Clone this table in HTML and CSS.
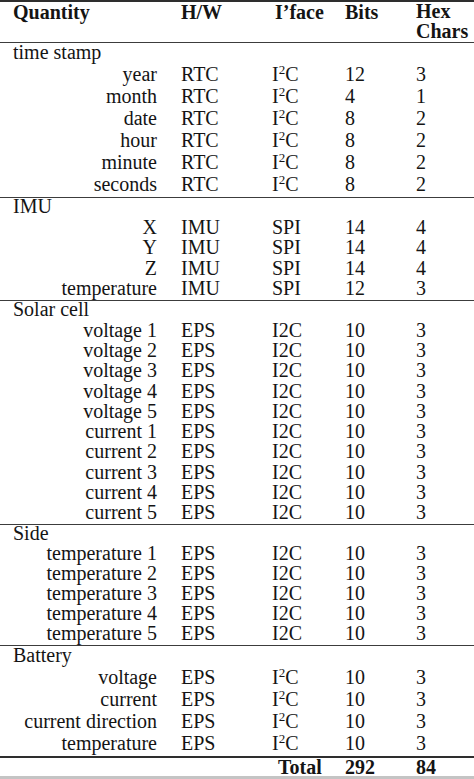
FILE: index.html
```html
<!DOCTYPE html>
<html>
<head>
<meta charset="utf-8">
<link rel="stylesheet" href="styles.css">
</head>
<body>
<table class="tbl">
  <colgroup>
    <col class="c1"><col class="c2"><col class="c3"><col class="c4"><col class="c5">
  </colgroup>
  <thead>
    <tr>
      <th class="q">Quantity</th>
      <th>H/W</th>
      <th>I’face</th>
      <th>Bits</th>
      <th><span class="hl">Hex</span><span class="hl">Chars</span></th>
    </tr>
  </thead>
  <tbody class="g1">
    <tr><td class="lbl" colspan="5">time stamp</td></tr>
    <tr><td class="n">year</td><td>RTC</td><td>I<sup class="s">2</sup>C</td><td>12</td><td>3</td></tr>
    <tr><td class="n">month</td><td>RTC</td><td>I<sup class="s">2</sup>C</td><td>4</td><td>1</td></tr>
    <tr><td class="n">date</td><td>RTC</td><td>I<sup class="s">2</sup>C</td><td>8</td><td>2</td></tr>
    <tr><td class="n">hour</td><td>RTC</td><td>I<sup class="s">2</sup>C</td><td>8</td><td>2</td></tr>
    <tr><td class="n">minute</td><td>RTC</td><td>I<sup class="s">2</sup>C</td><td>8</td><td>2</td></tr>
    <tr><td class="n">seconds</td><td>RTC</td><td>I<sup class="s">2</sup>C</td><td>8</td><td>2</td></tr>
  </tbody>
  <tbody class="g2">
    <tr><td class="lbl" colspan="5">IMU</td></tr>
    <tr><td class="n">X</td><td>IMU</td><td>SPI</td><td>14</td><td>4</td></tr>
    <tr><td class="n">Y</td><td>IMU</td><td>SPI</td><td>14</td><td>4</td></tr>
    <tr><td class="n">Z</td><td>IMU</td><td>SPI</td><td>14</td><td>4</td></tr>
    <tr><td class="n">temperature</td><td>IMU</td><td>SPI</td><td>12</td><td>3</td></tr>
  </tbody>
  <tbody class="g3">
    <tr><td class="lbl" colspan="5">Solar cell</td></tr>
    <tr><td class="n">voltage 1</td><td>EPS</td><td>I2C</td><td>10</td><td>3</td></tr>
    <tr><td class="n">voltage 2</td><td>EPS</td><td>I2C</td><td>10</td><td>3</td></tr>
    <tr><td class="n">voltage 3</td><td>EPS</td><td>I2C</td><td>10</td><td>3</td></tr>
    <tr><td class="n">voltage 4</td><td>EPS</td><td>I2C</td><td>10</td><td>3</td></tr>
    <tr><td class="n">voltage 5</td><td>EPS</td><td>I2C</td><td>10</td><td>3</td></tr>
    <tr><td class="n">current 1</td><td>EPS</td><td>I2C</td><td>10</td><td>3</td></tr>
    <tr><td class="n">current 2</td><td>EPS</td><td>I2C</td><td>10</td><td>3</td></tr>
    <tr><td class="n">current 3</td><td>EPS</td><td>I2C</td><td>10</td><td>3</td></tr>
    <tr><td class="n">current 4</td><td>EPS</td><td>I2C</td><td>10</td><td>3</td></tr>
    <tr><td class="n">current 5</td><td>EPS</td><td>I2C</td><td>10</td><td>3</td></tr>
  </tbody>
  <tbody class="g4">
    <tr><td class="lbl" colspan="5">Side</td></tr>
    <tr><td class="n">temperature 1</td><td>EPS</td><td>I2C</td><td>10</td><td>3</td></tr>
    <tr><td class="n">temperature 2</td><td>EPS</td><td>I2C</td><td>10</td><td>3</td></tr>
    <tr><td class="n">temperature 3</td><td>EPS</td><td>I2C</td><td>10</td><td>3</td></tr>
    <tr><td class="n">temperature 4</td><td>EPS</td><td>I2C</td><td>10</td><td>3</td></tr>
    <tr><td class="n">temperature 5</td><td>EPS</td><td>I2C</td><td>10</td><td>3</td></tr>
  </tbody>
  <tbody class="g5">
    <tr><td class="lbl" colspan="5">Battery</td></tr>
    <tr><td class="n">voltage</td><td>EPS</td><td>I<sup class="s">2</sup>C</td><td>10</td><td>3</td></tr>
    <tr><td class="n">current</td><td>EPS</td><td>I<sup class="s">2</sup>C</td><td>10</td><td>3</td></tr>
    <tr><td class="n">current direction</td><td>EPS</td><td>I<sup class="s">2</sup>C</td><td>10</td><td>3</td></tr>
    <tr><td class="n">temperature</td><td>EPS</td><td>I<sup class="s">2</sup>C</td><td>10</td><td>3</td></tr>
  </tbody>
  <tfoot>
    <tr class="tot">
      <td></td><td></td><td class="tl">Total</td><td>292</td><td>84</td>
    </tr>
  </tfoot>
</table>
</body>
</html>
```

FILE: styles.css
```css
html, body {
  margin: 0;
  padding: 0;
  background: #ffffff;
}

body {
  width: 474px;
  height: 779px;
  overflow: hidden;
  font-family: "Liberation Serif", "Times New Roman", serif;
  font-size: 20px;
  color: #141414;
}

.tbl {
  width: 474px;
  table-layout: fixed;
  border-collapse: separate;
  border-spacing: 0;
}

.c1 { width: 170px; }
.c2 { width: 92px; }
.c3 { width: 73px; }
.c4 { width: 71px; }
.c5 { width: 68px; }

th, td {
  padding: 0 0 3px 10px;
  text-align: left;
  vertical-align: top;
  white-space: nowrap;
  font-weight: normal;
}

th:nth-child(2), td:nth-child(2) { padding-left: 11px; }

thead th {
  font-weight: bold;
  line-height: 20px;
  padding-top: 0;
  padding-bottom: 0;
  border-top: 2px solid #2e2e2e;
  border-bottom: 1.5px solid #3c3c3c;
}

.hl {
  display: block;
  height: 20px;
  line-height: 18px;
}

thead th.q { padding-left: 13px; }
thead th:nth-child(3) { padding-left: 13px; }

td.n {
  text-align: right;
  padding-left: 0;
  padding-right: 13px;
}

td.lbl {
  padding-left: 13px;
}

tbody tr:first-child td {
  border-top: 1px solid #3c3c3c;
}

tbody.g1 tr:first-child td { border-top: none; }

.g1 td { line-height: 19.07px; }
.g2 td { line-height: 17.4px; }
.g3 td { line-height: 17.27px; }
.g4 td { line-height: 17px; }
.g5 td { line-height: 18.9px; }

.s {
  font-size: 13px;
  line-height: 0;
  vertical-align: 7px;
}

tfoot td {
  font-weight: bold;
  line-height: 18px;
  padding-bottom: 0;
  border-top: 2px solid #2e2e2e;
  border-bottom: 3px solid #c4c4c4;
}

tfoot td.tl { padding-left: 16px; }
```
